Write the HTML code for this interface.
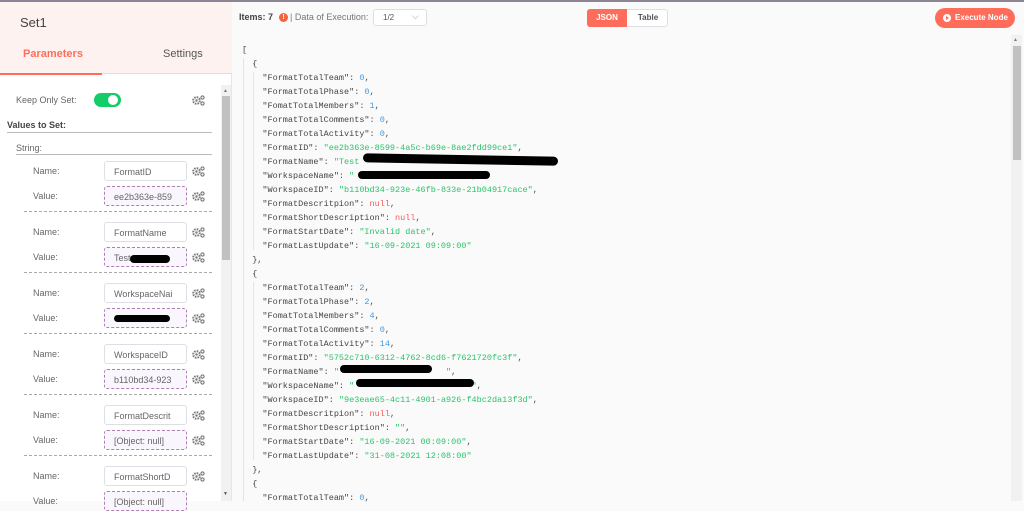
<!DOCTYPE html>
<html><head><meta charset="utf-8"><style>
*{box-sizing:border-box;margin:0;padding:0}
body{width:1024px;height:501px;overflow:hidden;background:#fafafa;font-family:"Liberation Sans",sans-serif;position:relative;color:#555}
.a{position:absolute}
#top{left:0;top:0;width:1024px;height:2px;background:#8d8493}
#left{left:0;top:2px;width:232px;height:499px;background:#fff;border-right:1px solid #e6e6e6}
#hdr{left:0;top:0;width:232px;height:72px;background:#fdf2f0}
.gear{position:absolute;width:13px;height:11px}
.lbl{position:absolute;font-size:9px;color:#666}
.inp{position:absolute;left:104px;width:83px;height:20px;border:1px solid #dcdfe6;border-radius:3px;background:#fff;font-size:9px;color:#666;padding:5px 0 0 9px;white-space:nowrap;overflow:hidden}
.val{border:1px dashed #b07fb5;background:#faf6fd}
.sep{position:absolute;left:24px;width:188px;border-top:1px dashed #aaa}
.blot{position:absolute;background:#000;border-radius:5px}
pre{position:absolute;left:242px;top:43px;font-family:"Liberation Mono",monospace;font-size:8.5px;line-height:14px;color:#444}
.n{color:#3b9be9}.s{color:#2bc46b}.r{color:#f45b5b}
.g{position:absolute;width:1px;background:#e4e4e4}
</style></head><body>
<div class="a" id="top"></div>
<div class="a" id="left">
 <div class="a" id="hdr"></div>
 <div class="a" style="left:20px;top:13px;font-size:13px;color:#444">Set1</div>
 <div class="a" style="left:23px;top:46px;font-size:11px;font-weight:bold;color:#ff6d5a">Parameters</div>
 <div class="a" style="left:163px;top:46px;font-size:11px;color:#555">Settings</div>
 <div class="a" style="left:0;top:71px;width:232px;height:1px;background:#dcdfe6"></div>
 <div class="a" style="left:0;top:71px;width:102px;height:2px;background:#ff6d5a"></div>
 <div class="lbl" style="left:16px;top:93px">Keep Only Set:</div>
 <div class="a" style="left:94px;top:91px;width:27px;height:14px;border-radius:7px;background:#13ce66"><div class="a" style="left:14px;top:2px;width:10px;height:10px;border-radius:5px;background:#fff"></div></div>
 <div class="a" style="left:7px;top:118px;font-size:9px;font-weight:bold;color:#444">Values to Set:</div>
 <div class="a" style="left:7px;top:130px;width:205px;height:1px;background:#bbb"></div>
 <div class="lbl" style="left:16px;top:141px">String:</div>
 <div class="a" style="left:16px;top:152px;width:196px;height:1px;background:#bbb"></div>
 <div class="a" style="left:221px;top:83px;width:10px;height:416px;background:#f1f1f1"></div>
 <div class="a" style="left:222px;top:94px;width:8px;height:164px;background:#c1c1c1"></div>
 <div class="a" style="left:223px;top:86px;font-size:5px;color:#777">▲</div>
 <div class="a" style="left:223px;top:489px;font-size:5px;color:#555">▼</div>
</div>
<svg width="0" height="0" style="position:absolute"><defs><symbol id="gr" viewBox="0 0 13 11"><circle cx="4.5" cy="5.5" r="3.3" fill="none" stroke="#777" stroke-width="2" stroke-dasharray="1.6 1"/><circle cx="4.5" cy="5.5" r="1.2" fill="#777"/><circle cx="10.5" cy="2.5" r="1.6" fill="none" stroke="#777" stroke-width="1.1"/><circle cx="10.5" cy="8.5" r="1.6" fill="none" stroke="#777" stroke-width="1.1"/></symbol></defs></svg>
<svg class="gear" style="left:192px;top:95px"><use href="#gr"/></svg>

<div id="rows"></div>
<!-- rows -->
<div class="lbl" style="left:33px;top:166px">Name:</div><div class="inp" style="top:161px">FormatID</div><svg class="gear" style="left:192px;top:166px"><use href="#gr"/></svg>
<div class="lbl" style="left:33px;top:191px">Value:</div><div class="inp val" style="top:186px">ee2b363e-859</div><svg class="gear" style="left:192px;top:191px"><use href="#gr"/></svg>
<div class="sep" style="top:211px"></div>

<div class="lbl" style="left:33px;top:227px">Name:</div><div class="inp" style="top:222px">FormatName</div><svg class="gear" style="left:192px;top:227px"><use href="#gr"/></svg>
<div class="lbl" style="left:33px;top:252px">Value:</div><div class="inp val" style="top:247px">Test</div><svg class="gear" style="left:192px;top:252px"><use href="#gr"/></svg>
<div class="blot" style="left:130px;top:255px;width:40px;height:8px"></div>
<div class="sep" style="top:272px"></div>

<div class="lbl" style="left:33px;top:288px">Name:</div><div class="inp" style="top:283px">WorkspaceNai</div><svg class="gear" style="left:192px;top:288px"><use href="#gr"/></svg>
<div class="lbl" style="left:33px;top:313px">Value:</div><div class="inp val" style="top:308px"></div><svg class="gear" style="left:192px;top:313px"><use href="#gr"/></svg>
<div class="blot" style="left:114px;top:315px;width:56px;height:7px"></div>
<div class="sep" style="top:333px"></div>

<div class="lbl" style="left:33px;top:349px">Name:</div><div class="inp" style="top:344px">WorkspaceID</div><svg class="gear" style="left:192px;top:349px"><use href="#gr"/></svg>
<div class="lbl" style="left:33px;top:374px">Value:</div><div class="inp val" style="top:369px">b110bd34-923</div><svg class="gear" style="left:192px;top:374px"><use href="#gr"/></svg>
<div class="sep" style="top:394px"></div>

<div class="lbl" style="left:33px;top:410px">Name:</div><div class="inp" style="top:405px">FormatDescrit</div><svg class="gear" style="left:192px;top:410px"><use href="#gr"/></svg>
<div class="lbl" style="left:33px;top:435px">Value:</div><div class="inp val" style="top:430px">[Object: null]</div><svg class="gear" style="left:192px;top:435px"><use href="#gr"/></svg>
<div class="sep" style="top:455px"></div>

<div class="lbl" style="left:33px;top:471px">Name:</div><div class="inp" style="top:466px">FormatShortD</div><svg class="gear" style="left:192px;top:471px"><use href="#gr"/></svg>
<div class="lbl" style="left:33px;top:496px">Value:</div><div class="inp val" style="top:491px">[Object: null]</div>

<!-- right header -->
<div class="a" style="left:239px;top:12px;font-size:9px;color:#555"><b style="color:#444">Items: 7</b></div>
<div class="a" style="left:279px;top:13px;width:9px;height:9px;border-radius:5px;background:#f0643f;color:#fff;font-size:7px;font-weight:bold;text-align:center;line-height:9px">!</div>
<div class="a" style="left:290px;top:12px;font-size:9px;color:#777">| Data of Execution:</div>
<div class="a" style="left:373px;top:9px;width:54px;height:17px;border:1px solid #dcdfe6;border-radius:3px;background:#fff;font-size:8px;color:#555;padding:3px 0 0 9px">1/2<span style="position:absolute;left:38px;top:1px;color:#999;font-size:9px">⌵</span></div>
<div class="a" style="left:587px;top:9px;width:81px;height:18px;border:1px solid #dcdfe6;border-radius:3px;background:#fff"></div>
<div class="a" style="left:587px;top:9px;width:40px;height:18px;background:#ff6d5a;border-radius:3px 0 0 3px;color:#fff;font-size:8px;font-weight:bold;text-align:center;line-height:18px">JSON</div>
<div class="a" style="left:628px;top:9px;width:40px;height:18px;color:#555;font-size:8px;font-weight:bold;text-align:center;line-height:18px">Table</div>
<div class="a" style="left:935px;top:8px;width:80px;height:20px;border-radius:10px;background:#ff6d5a;color:#fff;font-size:8px;font-weight:bold;line-height:20px;padding-left:20px">Execute Node</div>
<div class="a" style="left:943px;top:14px;width:8px;height:8px;border-radius:4px;background:#fff"><div class="a" style="left:3px;top:2px;border-left:3px solid #ff6d5a;border-top:2px solid transparent;border-bottom:2px solid transparent"></div></div>
<div class="a" style="left:1011px;top:35px;width:11px;height:466px;background:#f1f1f1"></div>
<div class="a" style="left:1013px;top:46px;width:8px;height:114px;background:#c1c1c1"></div>
<div class="a" style="left:1013px;top:37px;font-size:5px;color:#777">▲</div>

<div class="g" style="left:243px;top:58px;height:443px"></div>
<div class="g" style="left:253px;top:72px;height:178px"></div>
<div class="g" style="left:253px;top:282px;height:178px"></div>
<pre>[
  {
    "FormatTotalTeam": <span class="n">0</span>,
    "FormatTotalPhase": <span class="n">0</span>,
    "FomatTotalMembers": <span class="n">1</span>,
    "FormatTotalComments": <span class="n">0</span>,
    "FormatTotalActivity": <span class="n">0</span>,
    "FormatID": <span class="s">"ee2b363e-8599-4a5c-b69e-8ae2fdd99ce1"</span>,
    "FormatName": <span class="s">"Test                                 "</span>,
    "WorkspaceName": <span class="s">"                      "</span>,
    "WorkspaceID": <span class="s">"b110bd34-923e-46fb-833e-21b04917cace"</span>,
    "FormatDescritpion": <span class="r">null</span>,
    "FormatShortDescription": <span class="r">null</span>,
    "FormatStartDate": <span class="s">"Invalid date"</span>,
    "FormatLastUpdate": <span class="s">"16-09-2021 09:09:00"</span>
  },
  {
    "FormatTotalTeam": <span class="n">2</span>,
    "FormatTotalPhase": <span class="n">2</span>,
    "FomatTotalMembers": <span class="n">4</span>,
    "FormatTotalComments": <span class="n">0</span>,
    "FormatTotalActivity": <span class="n">14</span>,
    "FormatID": <span class="s">"5752c710-6312-4762-8cd6-f7621720fc3f"</span>,
    "FormatName": <span class="s">"                     "</span>,
    "WorkspaceName": <span class="s">"                       "</span>,
    "WorkspaceID": <span class="s">"9e3eae65-4c11-4901-a926-f4bc2da13f3d"</span>,
    "FormatDescritpion": <span class="r">null</span>,
    "FormatShortDescription": <span class="s">""</span>,
    "FormatStartDate": <span class="s">"16-09-2021 00:09:00"</span>,
    "FormatLastUpdate": <span class="s">"31-08-2021 12:08:00"</span>
  },
  {
    "FormatTotalTeam": <span class="n">0</span>,
</pre>
<div class="blot" style="left:363px;top:155px;width:195px;height:9px;transform:rotate(1deg)"></div>
<div class="blot" style="left:358px;top:171px;width:132px;height:8px"></div>
<div class="blot" style="left:340px;top:365px;width:92px;height:8px"></div>
<div class="blot" style="left:356px;top:379px;width:118px;height:8px"></div>
</body></html>
